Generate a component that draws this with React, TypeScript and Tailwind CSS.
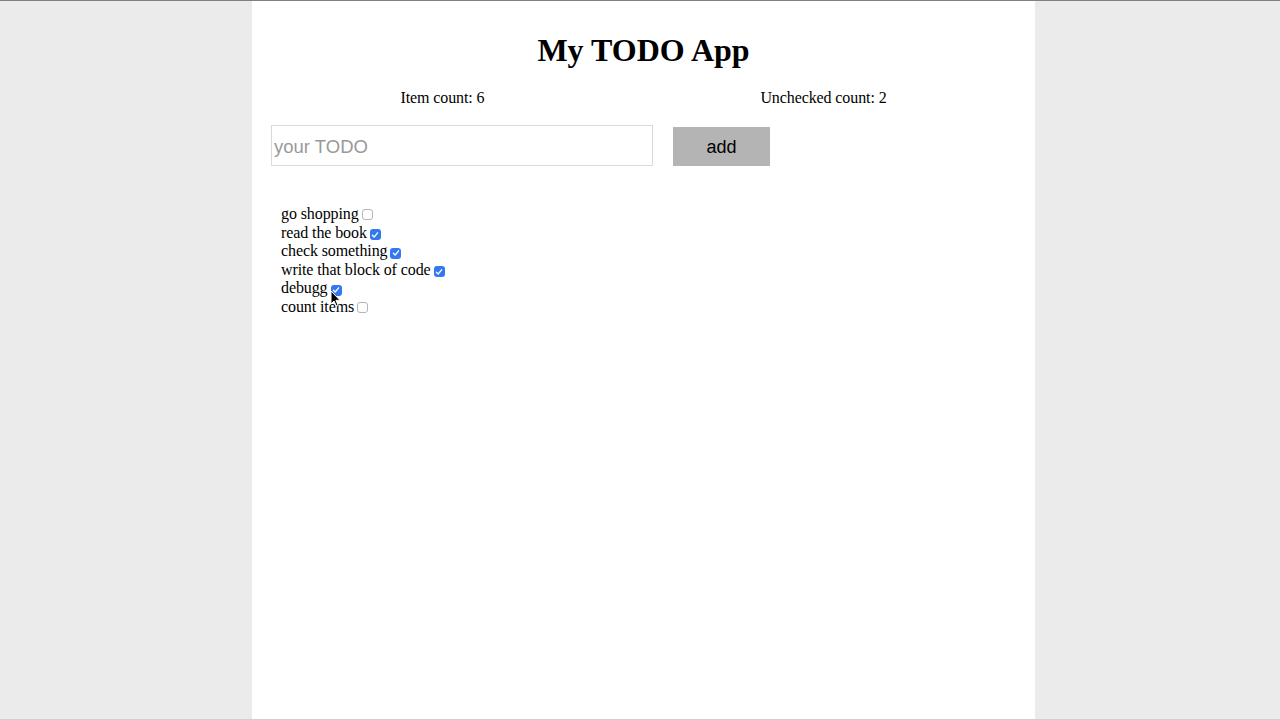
import React from 'react';

interface TodoItem {
  id: number;
  text: string;
  checked: boolean;
}

const ITEMS: TodoItem[] = [
  { id: 1, text: 'go shopping', checked: false },
  { id: 2, text: 'read the book', checked: true },
  { id: 3, text: 'check something', checked: true },
  { id: 4, text: 'write that block of code', checked: true },
  { id: 5, text: 'debugg', checked: true },
  { id: 6, text: 'count items', checked: false },
];

const CheckBox = ({ checked }: { checked: boolean }) =>
  checked ? (
    <span className="ml-[3px] inline-flex h-[11px] w-[11px] items-center justify-center rounded-[3px] bg-[#3478f0] align-[-1px]">
      <svg width="8" height="8" viewBox="0 0 8 8" fill="none">
        <path
          d="M1.4 4.2 L3.2 6 L6.6 1.8"
          stroke="white"
          strokeWidth="1.3"
          strokeLinecap="round"
          strokeLinejoin="round"
        />
      </svg>
    </span>
  ) : (
    <span className="ml-[3px] inline-block h-[11px] w-[11px] rounded-[3px] border border-[#b5b5b5] bg-white align-[-1px]" />
  );

// mouse pointer sitting over the "debugg" checkbox
const Cursor = () => (
  <svg
    className="absolute left-[330px] top-[289px]"
    width="12"
    height="17"
    viewBox="0 0 12 17"
  >
    <path
      d="M1 1 L1 14 L4 11 L6.2 15.8 L8 15 L5.9 10.3 L10 10.3 Z"
      fill="black"
      stroke="white"
      strokeWidth="1"
      strokeLinejoin="round"
    />
  </svg>
);

export default function App() {
  const unchecked = ITEMS.filter((item) => !item.checked).length;

  return (
    <div className="relative h-[720px] overflow-hidden border-t border-b border-t-[#808080] border-b-[#cfcfcf] bg-[#ebebeb]">
      <div
        className="ml-[252px] h-full w-[783px] bg-white pt-[31px] text-black"
        style={{ fontFamily: '"Liberation Serif", "Times New Roman", serif' }}
      >
        <h1 className="text-center text-[32px] font-bold leading-[37px]">
          My TODO App
        </h1>

        {/* counters */}
        <div className="mt-[20px] grid w-[762px] grid-cols-2 text-[16px] leading-[18px] tracking-[-0.1px]">
          <div className="text-center">Item count: {ITEMS.length}</div>
          <div className="text-center">Unchecked count: {unchecked}</div>
        </div>

        {/* new todo form */}
        <div className="mt-[18px] flex items-end gap-[20px] pl-[19px]">
          <input
            type="text"
            placeholder="your TODO"
            className="h-[41px] w-[382px] border border-[#dadada] px-[2px] pt-[2px] text-[18.5px] outline-none placeholder:text-[#999999]"
            style={{ fontFamily: '"Liberation Sans", Arial, sans-serif' }}
          />
          <button
            className="h-[39px] w-[97px] bg-[#b4b4b4] pt-[1px] text-[18px] text-black"
            style={{ fontFamily: '"Liberation Sans", Arial, sans-serif' }}
          >
            add
          </button>
        </div>

        {/* todo list */}
        <ul className="mt-[39px] pl-[29px] text-[16px] leading-[18.5px] tracking-[-0.1px]">
          {ITEMS.map((item) => (
            <li key={item.id}>
              {item.text}
              <CheckBox checked={item.checked} />
            </li>
          ))}
        </ul>
      </div>
      <Cursor />
    </div>
  );
}
